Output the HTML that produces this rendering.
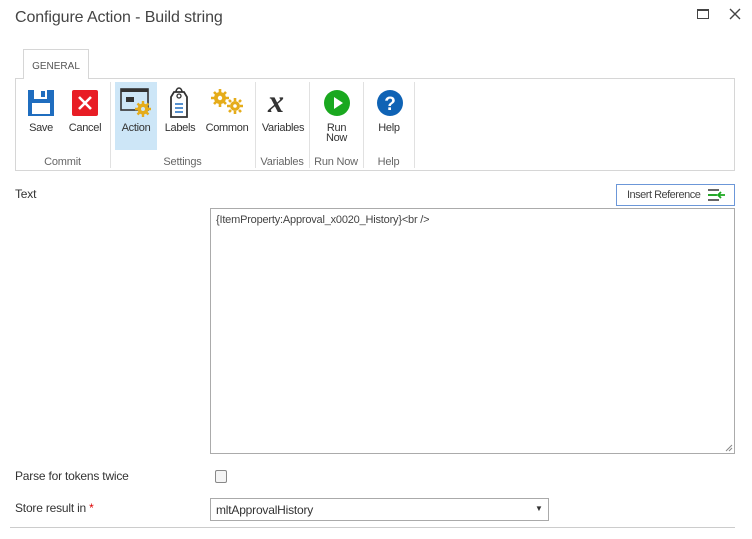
<!DOCTYPE html>
<html><head><style>
*{box-sizing:border-box}
body{margin:0;width:752px;height:539px;background:#fff;font-family:"Liberation Sans",sans-serif;color:#333;position:relative;overflow:hidden}
.a{position:absolute}
.t{font-size:11px;letter-spacing:-0.2px;color:#444;white-space:nowrap}
.lbl{font-size:12px;letter-spacing:-0.2px;color:#333;white-space:nowrap}
.sep{position:absolute;top:82px;width:1px;height:86px;background:#e1e1e1}
.gl{position:absolute;top:156px;font-size:11px;color:#666;text-align:center;letter-spacing:-0.2px}
.bl{position:absolute;top:123px;font-size:11px;color:#333;text-align:center;letter-spacing:-0.3px;line-height:10px}
</style></head><body>
<div class="a" style="left:15px;top:9px;font-size:16px;color:#444;letter-spacing:-0.1px">Configure Action - Build string</div>
<div class="a" style="left:697px;top:9px;width:12px;height:10px;border:1px solid #444;border-top-width:2px"></div>
<svg class="a" style="left:729px;top:8px" width="12" height="12"><path d="M1 1L11 11M11 1L1 11" stroke="#444" stroke-width="1.4"/></svg>

<div class="a" style="left:23px;top:49px;width:66px;height:30px;border:1px solid #d6d6d6;border-bottom:none;background:#fff;z-index:2;font-size:10px;color:#555;text-align:center;line-height:33px">GENERAL</div>
<div class="a" style="left:15px;top:78px;width:720px;height:93px;border:1px solid #d6d6d6"></div>
<div class="a" style="left:115px;top:82px;width:42px;height:68px;background:#cde6f7"></div>
<div class="sep" style="left:110px"></div><div class="sep" style="left:255px"></div><div class="sep" style="left:309px"></div><div class="sep" style="left:363px"></div><div class="sep" style="left:414px"></div>

<svg class="a" style="left:28px;top:90px" width="26" height="26"><rect x="0" y="0" width="26" height="26" fill="#1f6dbf"/><rect x="6" y="0" width="13" height="9" fill="#fff"/><rect x="13" y="1" width="4" height="6" fill="#1f6dbf"/><rect x="4" y="13" width="18" height="11" fill="#fff"/></svg>
<svg class="a" style="left:72px;top:90px" width="26" height="26"><rect width="26" height="26" rx="2" fill="#e81d25"/><path d="M7 7L19 19M19 7L7 19" stroke="#fff" stroke-width="2.6"/></svg>
<svg class="a" style="left:120px;top:88px" width="32" height="30"><rect x="1" y="1" width="27" height="21" fill="none" stroke="#333" stroke-width="1.6"/><rect x="1" y="1" width="27" height="3" fill="#333"/><rect x="6" y="9" width="8" height="5" fill="#333"/><circle cx="23" cy="21" r="5.5" fill="#e5ac1a"/><circle cx="23" cy="21" r="2" fill="#cde6f7"/><path d="M23 13v3M23 26v3M15 21h3M28 21h3M17.5 15.5l2 2M26.5 24.5l2 2M17.5 26.5l2-2M26.5 17.5l2-2" stroke="#e5ac1a" stroke-width="2.4"/></svg>
<svg class="a" style="left:168px;top:87px" width="22" height="32"><path d="M6 5h10l3 5v20H3V10z" fill="none" stroke="#333" stroke-width="1.8"/><circle cx="11" cy="9" r="2" fill="none" stroke="#333" stroke-width="1.3"/><path d="M8 5a3 4 0 0 1 6 0" fill="none" stroke="#333" stroke-width="1.5"/><path d="M7 17h8M7 21h8M7 25h8" stroke="#1f6dbf" stroke-width="1.4"/></svg>
<svg class="a" style="left:210px;top:88px" width="34" height="26"><g fill="#e5ac1a"><circle cx="10" cy="10" r="6"/><circle cx="25" cy="18" r="5"/></g><path d="M10 1v4M10 15v4M1 10h4M15 10h4M4 4l3 3M13 13l3 3M4 16l3-3M13 7l3-3M25 10v3M25 23v3M17 18h3M30 18h3M19 12l2 2M29 22l2 2M19 24l2-2M29 14l2-2" stroke="#e5ac1a" stroke-width="2.6"/><circle cx="10" cy="10" r="2.2" fill="#fff"/><circle cx="25" cy="18" r="1.8" fill="#fff"/></svg>
<div class="a" style="left:268px;top:83px;font-family:'Liberation Serif',serif;font-style:italic;font-weight:bold;font-size:32px;color:#333">x</div>
<svg class="a" style="left:323px;top:89px" width="28" height="28"><circle cx="14" cy="14" r="13" fill="#1aa81f"/><path d="M11 8l9 6-9 6z" fill="#fff"/></svg>
<svg class="a" style="left:376px;top:89px" width="28" height="28"><circle cx="14" cy="14" r="13" fill="#0f63b5"/><text x="14" y="21" text-anchor="middle" font-family="Liberation Sans" font-weight="bold" font-size="19" fill="#fff">?</text></svg>

<div class="bl" style="left:20px;width:42px">Save</div>
<div class="bl" style="left:64px;width:42px">Cancel</div>
<div class="bl" style="left:115px;width:42px">Action</div>
<div class="bl" style="left:160px;width:40px">Labels</div>
<div class="bl" style="left:202px;width:50px">Common</div>
<div class="bl" style="left:257px;width:52px">Variables</div>
<div class="bl" style="left:310px;width:53px">Run<br>Now</div>
<div class="bl" style="left:364px;width:50px">Help</div>
<div class="gl" style="left:15px;width:95px">Commit</div>
<div class="gl" style="left:110px;width:145px">Settings</div>
<div class="gl" style="left:255px;width:54px">Variables</div>
<div class="gl" style="left:309px;width:54px">Run Now</div>
<div class="gl" style="left:363px;width:51px">Help</div>

<div class="a lbl" style="left:15px;top:187px">Text</div>
<div class="a" style="left:616px;top:184px;width:119px;height:22px;border:1px solid #6c97d8;font-size:11px;color:#444;line-height:20px;padding-left:10px;letter-spacing:-0.5px">Insert Reference</div>
<svg class="a" style="left:708px;top:189px" width="18" height="12"><path d="M0 1h11M0 6h8M0 11h11" stroke="#333" stroke-width="1.5"/><path d="M0 6h9" stroke="#1aa81f" stroke-width="1.8"/><path d="M17 6h-6M13 3l-3 3 3 3" stroke="#1aa81f" stroke-width="1.8" fill="none"/></svg>
<div class="a" style="left:210px;top:208px;width:525px;height:246px;border:1px solid #ababab"></div>
<div class="a t" style="left:216px;top:214px">{ItemProperty:Approval_x0020_History}&lt;br /&gt;</div>
<svg class="a" style="left:725px;top:444px" width="8" height="8"><path d="M7 1L1 7M7 4L4 7" stroke="#888"/></svg>

<div class="a lbl" style="left:15px;top:469px">Parse for tokens twice</div>
<div class="a" style="left:215px;top:470px;width:12px;height:13px;border:1px solid #888;border-radius:2px;background:#f4f4f4"></div>
<div class="a lbl" style="left:15px;top:501px">Store result in <span style="color:#d00">*</span></div>
<div class="a" style="left:210px;top:498px;width:339px;height:23px;border:1px solid #aaa;font-size:12px;color:#333;line-height:22px;padding-left:5px;letter-spacing:-0.2px">mltApprovalHistory</div>
<div class="a" style="left:535px;top:504px;font-size:8px;color:#333">▼</div>
<div class="a" style="left:10px;top:527px;width:725px;height:1px;background:#ccc"></div>
</body></html>
